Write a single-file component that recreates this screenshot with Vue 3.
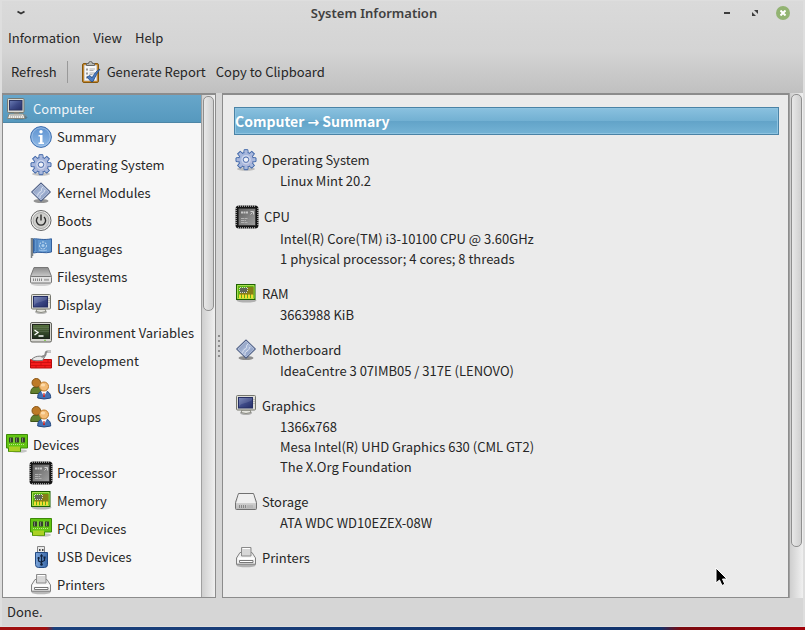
<script setup>
import { ref } from 'vue'

const selected = ref('Computer')

const tree = [
  { label: 'Computer', icon: 'computer', top: true },
  { label: 'Summary', icon: 'info' },
  { label: 'Operating System', icon: 'gear' },
  { label: 'Kernel Modules', icon: 'module' },
  { label: 'Boots', icon: 'power' },
  { label: 'Languages', icon: 'flag' },
  { label: 'Filesystems', icon: 'drive' },
  { label: 'Display', icon: 'display' },
  { label: 'Environment Variables', icon: 'terminal' },
  { label: 'Development', icon: 'bricks' },
  { label: 'Users', icon: 'users' },
  { label: 'Groups', icon: 'users' },
  { label: 'Devices', icon: 'card', top: true },
  { label: 'Processor', icon: 'cpu' },
  { label: 'Memory', icon: 'memory' },
  { label: 'PCI Devices', icon: 'card' },
  { label: 'USB Devices', icon: 'usb' },
  { label: 'Printers', icon: 'printer' },
]

const sections = [
  { title: 'Operating System', icon: 'gear', lines: ['Linux Mint 20.2'] },
  { title: 'CPU', icon: 'cpu', lines: ['Intel(R) Core(TM) i3-10100 CPU @ 3.60GHz', '1 physical processor; 4 cores; 8 threads'] },
  { title: 'RAM', icon: 'memory', lines: ['3663988 KiB'] },
  { title: 'Motherboard', icon: 'module', lines: ['IdeaCentre 3 07IMB05 / 317E (LENOVO)'] },
  { title: 'Graphics', icon: 'display', lines: ['1366x768', 'Mesa Intel(R) UHD Graphics 630 (CML GT2)', 'The X.Org Foundation'] },
  { title: 'Storage', icon: 'disk', lines: ['ATA WDC WD10EZEX-08W'] },
  { title: 'Printers', icon: 'printer', lines: [] },
]

const teeth = [0, 45, 90, 135, 180, 225, 270, 315]
</script>

<template>
  <div class="screen">
    <svg class="sprites" aria-hidden="true">
      <defs>
        <linearGradient id="g-screen" x1="0" y1="0" x2="1" y2="1"><stop offset="0" stop-color="#6c7db4" /><stop offset=".5" stop-color="#3d4a87" /><stop offset="1" stop-color="#242d66" /></linearGradient>
        <linearGradient id="g-info" x1="0" y1="0" x2="0" y2="1"><stop offset="0" stop-color="#5d92d0" /><stop offset="1" stop-color="#8fb9e6" /></linearGradient>
        <linearGradient id="g-gear" x1="0" y1="0" x2="1" y2="1"><stop offset="0" stop-color="#8fb0df" /><stop offset="1" stop-color="#c3bcd8" /></linearGradient>
        <linearGradient id="g-module" x1="0" y1="0" x2="1" y2="1"><stop offset="0" stop-color="#7888aa" /><stop offset=".5" stop-color="#a9b9d8" /><stop offset="1" stop-color="#6c80ad" /></linearGradient>
        <linearGradient id="g-metal" x1="0" y1="0" x2="0" y2="1"><stop offset="0" stop-color="#f2f2f2" /><stop offset="1" stop-color="#b9b9b9" /></linearGradient>
        <linearGradient id="g-drive" x1="0" y1="0" x2="0" y2="1"><stop offset="0" stop-color="#8c8c8c" /><stop offset="1" stop-color="#c9c9c9" /></linearGradient>
        <linearGradient id="g-term" x1="0" y1="0" x2="0" y2="1"><stop offset="0" stop-color="#58743f" /><stop offset="1" stop-color="#1d2b1d" /></linearGradient>
        <linearGradient id="g-chip" x1="0" y1="0" x2="1" y2="1"><stop offset="0" stop-color="#5e5e5e" /><stop offset="1" stop-color="#a0a0a0" /></linearGradient>
        <linearGradient id="g-usb" x1="0" y1="0" x2="1" y2="0"><stop offset="0" stop-color="#7ba5da" /><stop offset="1" stop-color="#3a68a8" /></linearGradient>
      </defs>

      <symbol id="computer" viewBox="0 0 22 22">
        <ellipse cx="13" cy="19.500" rx="8.500" ry="2" fill="#000" opacity=".25" />
        <rect x="1.500" y=".5" width="16.500" height="14" rx="1" fill="#dcdcd4" stroke="#77786f" />
        <rect x="3.500" y="2.500" width="12.500" height="9.500" fill="url(#g-screen)" stroke="#2c3563" />
        <path d="M8 14.500h5v2H8z" fill="#8d8d85" />
        <path d="M3 16h14.500l1.500 4.500H1.500z" fill="#ecece6" stroke="#84857c" />
        <path d="M4.500 17.500h12M4 19h13" stroke="#999" stroke-dasharray="1 1" />
        <path d="M18.500 17c2 0 2 1 1.500 2.500" stroke="#888" fill="none" />
      </symbol>

      <symbol id="info" viewBox="0 0 22 22">
        <circle cx="11" cy="11" r="10.400" fill="url(#g-info)" stroke="#3a6cae" />
        <circle cx="11" cy="11" r="9.200" fill="none" stroke="#b5d0ef" stroke-opacity=".6" />
        <circle cx="11" cy="5.800" r="1.700" fill="#fff" />
        <path d="M8.500 9h4v7.500h1.500V18H8.500v-1.500H10v-6H8.500z" fill="#fff" />
      </symbol>

      <symbol id="gear" viewBox="0 0 22 22">
        <ellipse cx="11" cy="20" rx="9" ry="1.800" fill="#000" opacity=".2" />
        <g fill="#9fb4dc" stroke="#3f66a8">
          <path v-for="a in teeth" :key="a" d="M8.700 5 9.200.7h3.600l.5 4.300z" :transform="`rotate(${a} 11 10.700)`" />
        </g>
        <circle cx="11" cy="10.700" r="7.300" fill="url(#g-gear)" stroke="#4a6dac" />
        <g fill="#a9b8dc"><path v-for="a in teeth" :key="a" d="M9.500 5.500V1.500h3v4z" :transform="`rotate(${a} 11 10.700)`" /></g>
        <circle cx="11" cy="10.700" r="4" fill="none" stroke="#cbd5ec" stroke-width="1.500" />
        <circle cx="11" cy="10.700" r="2.700" fill="#f2f4fa" stroke="#5372ae" />
      </symbol>

      <symbol id="module" viewBox="0 0 22 22">
        <ellipse cx="11" cy="19" rx="7.500" ry="2" fill="#000" opacity=".4" />
        <path d="M11 .8 20.500 10 11 19.300 1.500 10z" fill="url(#g-module)" stroke="#34466f" />
        <path d="M11 2.300 18.900 10 11 17.800 3.100 10z" fill="none" stroke="#c3cde2" stroke-opacity=".6" />
        <path d="M13 5c-3 2 0 4-3 5s-1 4-3 3M15 8c-1 2-1 3-3 4s-2 2-2 4" fill="none" stroke="#dfe6f3" />
      </symbol>

      <symbol id="power" viewBox="0 0 22 22">
        <circle cx="11" cy="10.500" r="10" fill="#ececea" stroke="#666" />
        <circle cx="11" cy="10.500" r="8" fill="#cfcfcc" stroke="#aaa" />
        <path d="M8 7a4.600 4.600 0 1 0 6 0M11 4.500v6" fill="none" stroke="#2c2c2c" stroke-width="1.400" />
      </symbol>

      <symbol id="flag" viewBox="0 0 22 22">
        <path d="M1.500 0v20M2.500 0v18" stroke="#7c8285" stroke-width="1.500" />
        <path d="M3.500 .8c6 0 10 1.500 18 0v13.200c-7 2-12-1-18 1z" fill="#6096cf" stroke="#335f9c" />
        <path d="M4.500 2v11M7 2v11.500" stroke="#34639f" opacity=".6" />
        <circle cx="13" cy="7.500" r="3.500" fill="none" stroke="#d4e6f7" stroke-dasharray="2 1" />
        <circle cx="13" cy="7.500" r="1.500" fill="#a9cdec" />
        <path d="M9 12c2 1 6 1 8 0" stroke="#9fc4ea" fill="none" />
      </symbol>

      <symbol id="drive" viewBox="0 0 22 22">
        <ellipse cx="11" cy="18" rx="10" ry="2" fill="#000" opacity=".15" />
        <path d="M4 1.500h14l3.500 9H.5z" fill="url(#g-drive)" stroke="#777" />
        <rect x=".5" y="10.500" width="21" height="6.500" rx="1" fill="#e4e4e4" stroke="#777" />
        <path d="M3 13.800h9" stroke="#888" stroke-width="2.500" stroke-dasharray="1 1" />
        <path d="M14 13.800h5" stroke="#aaa" stroke-width="2" />
      </symbol>

      <symbol id="disk" viewBox="0 0 22 22">
        <path d="M3.500 2.500h15l3 9v6q0 1-1 1h-19q-1 0-1-1v-6z" fill="url(#g-metal)" stroke="#707070" />
        <path d="M4 3.500h14l2.500 8.500h-19z" fill="#efefef" />
        <path d="M4 15.500h8" stroke="#888" stroke-width="3" stroke-dasharray="1 1" />
        <path d="M12.500 15.500h6" stroke="#aaa" stroke-width="3" stroke-dasharray="1 1" />
      </symbol>

      <symbol id="display" viewBox="0 0 22 22">
        <ellipse cx="11" cy="18" rx="6" ry="2" fill="#000" opacity=".25" />
        <path d="M7 15h8l1 2.500q-5 2-10 0z" fill="#e6e6e0" stroke="#8a8b82" />
        <rect x="1.500" y=".5" width="19" height="14.500" rx="1" fill="#deded7" stroke="#75766d" />
        <rect x="3.500" y="2.500" width="14" height="10.500" fill="url(#g-screen)" stroke="#252e63" />
        <path d="M4 12c2-5 8-3 13-7V3H4z" fill="#fff" opacity=".12" />
        <path d="M19 4v5" stroke="#999" stroke-dasharray="1 1" />
      </symbol>

      <symbol id="terminal" viewBox="0 0 22 22">
        <rect x=".5" y=".5" width="21" height="19.500" rx="1.500" fill="#d7d7d2" stroke="#62635d" />
        <rect x="2.500" y="2.500" width="17" height="14" fill="url(#g-term)" stroke="#20251e" />
        <path d="M3 5.500h16M3 7.500h16M3 9.500h16" stroke="#fff" opacity=".1" />
        <path d="m4.500 8 3.500 2.500L4.500 13M8.500 14h5" fill="none" stroke="#fff" stroke-width="1.300" />
        <path d="M14 18.300h2" stroke="#7ac943" />
      </symbol>

      <symbol id="bricks" viewBox="0 0 22 22">
        <path d="M.5 9.500h21v8.500H.5z" fill="#f41c1c" stroke="#b80c0c" />
        <path d="M1 12.500h20M1 15.500h20M4 10v2.500M11 12.500v3M18 10v2.500M6 15.500v2.500M15 15.500v2.500" stroke="#c80d0d" stroke-width=".8" />
        <path d="M1.500 9.500c5-5 11-3 13-2.500l-2 3.500c-3 0-8 1-11-1z" fill="#e8e8e8" stroke="#7b7b7b" />
        <path d="M12 7.500c1-3 3 0 3.500-3q0-3 2-3h3.500" fill="none" stroke="#8a8a8a" stroke-width="2" />
        <path d="M17.500 1.300h3.500" stroke="#d8d8d8" />
      </symbol>

      <symbol id="users" viewBox="0 0 22 22">
        <path d="M.7 15.500c0-5 2-6.500 5.500-6.500s6 2 6 6.500z" fill="#63802f" stroke="#3f5517" />
        <circle cx="6.300" cy="4.800" r="4.300" fill="#bd7a27" stroke="#8a5412" />
        <path d="M7.700 20c0-5 2-7 6.300-7s6.700 2 6.700 7q-6.700 2-13 0z" fill="#4472b4" stroke="#23477f" />
        <path d="m11 13 3 5.500L17 13z" fill="#fff" />
        <path d="M13.500 15h1l.5 4h-2z" fill="#c52020" />
        <circle cx="14" cy="8.500" r="4.500" fill="#f3bc76" stroke="#c17d2d" />
        <ellipse cx="13" cy="7" rx="2.200" ry="1.600" fill="#ffe2b8" opacity=".8" />
      </symbol>

      <symbol id="card" viewBox="0 0 22 22">
        <ellipse cx="13" cy="17" rx="8" ry="1.800" fill="#000" opacity=".2" />
        <path d="M.5.5h21v13.500h-7v3.500h-12V14h-2z" fill="#62c512" stroke="#3d8a08" />
        <path d="M3 3.500h4v5H3zM9 3.500h4v5H9zM15 3.500h4v5h-4z" fill="#33402a" />
        <path d="M4 5h1M10 5h1M16 5h1M4 7h1M10 7h1M16 7h1" stroke="#b9c9ae" />
        <path d="M8 3.500v5M14 3.500v5M3 10.500h16" stroke="#bde38b" stroke-dasharray="1 1" />
        <path d="M3.500 15h10.500" stroke="#f2dd35" stroke-width="5" stroke-dasharray="1 1" />
      </symbol>

      <symbol id="cpu" viewBox="0 0 24 24">
        <rect x=".5" y=".5" width="23" height="23" rx="3.500" fill="#151515" />
        <path d="M3 1h18M3 23h18M1 3v18M23 3v18" stroke="#bdbdbd" stroke-width="1.500" stroke-dasharray="1 1" />
        <rect x="3.500" y="3.500" width="17" height="17" rx="1" fill="url(#g-chip)" stroke="#3a3a3a" />
        <path d="M6 7.500h7.500" stroke="#c9c9c9" stroke-width="2" stroke-dasharray="2 .5" />
        <path d="M15.500 6.500h3v3M17.500 7.500l-2 2" fill="none" stroke="#cfcfcf" />
        <path d="M6 13.500h7M6 15.500h5M6 17.500h7" stroke="#b2b2b2" stroke-dasharray="3 .5" />
      </symbol>

      <symbol id="memory" viewBox="0 0 22 22">
        <ellipse cx="11.500" cy="17.500" rx="10" ry="2" fill="#000" opacity=".25" />
        <rect x="1.500" y="1.500" width="18.500" height="15" fill="#5cb513" stroke="#1f6104" />
        <path d="M2.500 2.500h16.500v13h-16.500z" fill="none" stroke="#a5dc4d" />
        <path d="M12 4h6.500v8H4.500v-2H12z" fill="#857f18" />
        <path d="M5 5h7v5H5z" fill="#5f6656" />
        <path d="M5 4.500h8M5 9.500h8M4.500 5v4M12.500 5v4" stroke="#d4d8cc" stroke-dasharray="1 1" />
        <path d="M4 13.500h14" stroke="#f4dc30" stroke-width="4" stroke-dasharray="2 1" />
      </symbol>

      <symbol id="usb" viewBox="0 0 22 22">
        <path d="M7.500.5h7v7h-7z" fill="#e9e9e9" stroke="#858585" />
        <path d="M9 3h1.500v2H9zM12 3h1.500v2H12z" fill="#444" />
        <path d="M5.500 6.500h12v12q0 3-3 3h-6q-3 0-3-3z" fill="url(#g-usb)" stroke="#234a83" />
        <path d="M11.500 9v10M8.500 12v3l3 1.500M14.500 11.500v3l-3 1.500" fill="none" stroke="#11233f" stroke-width="1.200" />
        <path d="m11.500 7.800-1.700 2.700h3.500zM7.700 11h1.800v2H7.700zM13.500 10.500h2v2h-2z" fill="#11233f" />
        <circle cx="11.500" cy="18.500" r="1.300" fill="#11233f" />
      </symbol>

      <symbol id="printer" viewBox="0 0 22 22">
        <ellipse cx="11" cy="18.500" rx="9.500" ry="1.800" fill="#000" opacity=".25" />
        <path d="M5 5.500h12l3.500 5.500v6.500H1.500V11z" fill="#f0f0f0" stroke="#808080" />
        <path d="M6.500.5h9.500v8.500H6.500z" fill="#d7d7d7" stroke="#8b8b8b" />
        <path d="M7.500 1.500h7.500" stroke="#fff" />
        <path d="M3 11.500h16.500" stroke="#fff" stroke-width="2" />
        <path d="M4.500 13.500h13.500v2H4.500z" fill="#fff" stroke="#777" />
        <path d="M2 16.800h18" stroke="#bbb" />
      </symbol>

      <symbol id="report" viewBox="0 0 22 22">
        <rect x="2.500" y="2.500" width="16" height="19" rx="1.500" fill="#c58a35" stroke="#85580f" />
        <path d="M4.500 4.500h12v15h-12z" fill="#f7f7f7" stroke="#d0d0d0" />
        <path d="M6.500 4.500v-2h2q0-2 2-2t2 2h2v2z" fill="#b9bab5" stroke="#666" />
        <path d="M6 7.500h2v2H6zM6 11.500h2v2H6zM6 15.500h2v2H6z" fill="#999" />
        <path d="M9.500 8h5.500M9.500 9.500h4M9.500 12h5.500M9.500 13.500h3M9.500 16h3" stroke="#b0b0b0" />
        <path d="m7 16 3-1.500 2 2.500c2-4 4-7 8-9-2 3-4.500 7-7 12.500H11z" fill="#4b7cc2" stroke="#204a87" stroke-width=".8" />
      </symbol>
    </svg>

    <div class="window">
      <header class="titlebar">
        <button class="wm" aria-label="Window menu"><svg width="10" height="6" viewBox="0 0 10 6"><path d="m1.500 1.500 3.500 2 3.500-2" fill="none" stroke="#333" stroke-width="1.800" /></svg></button>
        <h1>System Information</h1>
        <div class="wm-group">
          <button class="wm" aria-label="Minimize"><svg width="6" height="2"><path d="M0 0h6v2H0z" fill="#3c3c3c" /></svg></button>
          <button class="wm" aria-label="Maximize"><svg width="6" height="6"><path d="M2 0h4v4zM0 2v4h4z" fill="#3c3c3c" /></svg></button>
          <button class="wm close" aria-label="Close"><svg width="6" height="6"><path d="m.5.5 5 5m0-5-5 5" stroke="#fff" stroke-width="2" /></svg></button>
        </div>
      </header>

      <nav class="menubar" aria-label="Menu">
        <button>Information</button><button>View</button><button>Help</button>
      </nav>

      <div class="toolbar" role="toolbar">
        <button>Refresh</button>
        <span class="divider"></span>
        <button><svg class="icon"><use href="#report" /></svg>Generate Report</button>
        <button>Copy to Clipboard</button>
      </div>

      <main class="panes">
        <section class="pane side">
          <ul class="tree">
            <li v-for="item in tree" :key="item.label">
              <button :class="{ top: item.top, selected: selected === item.label }" @click="selected = item.label">
                <span class="slot"><svg class="icon" :class="{ wide: item.icon === 'cpu' }"><use :href="'#' + item.icon" /></svg></span>{{ item.label }}
              </button>
            </li>
          </ul>
          <div class="scroll"><div class="thumb short"></div></div>
        </section>

        <div class="grip" role="separator" aria-orientation="vertical">
          <i v-for="n in 5" :key="n"></i>
        </div>

        <section class="pane detail">
          <div class="content">
            <h2>Computer <span class="arrow">→</span> Summary</h2>
            <article v-for="s in sections" :key="s.title">
              <h3><svg class="icon" :class="{ wide: s.icon === 'cpu' }"><use :href="'#' + s.icon" /></svg>{{ s.title }}</h3>
              <p v-for="line in s.lines" :key="line">{{ line }}</p>
            </article>
          </div>
        </section>
        <div class="scroll"><div class="thumb long"></div></div>
      </main>

      <footer>Done.</footer>
    </div>
    <div class="desktop"></div>

    <svg class="pointer" width="14" height="20" viewBox="0 0 14 20" aria-hidden="true">
      <path d="M1 1v15l3.500-3 2.500 5.500 2.800-1.300L7.500 12H12z" fill="#000" stroke="#fff" />
    </svg>
  </div>
</template>

<style>
body { margin: 0; }
</style>

<style scoped>
* { box-sizing: border-box; }
.screen {
  display: flex;
  flex-direction: column;
  height: 100vh;
  overflow: hidden;
  color: #262626;
  font-family: "Noto Sans CJK JP", "Noto Sans", sans-serif;
  font-size: 13px;
  line-height: 20px;
}
.sprites { position: absolute; width: 0; height: 0; }
button {
  display: flex;
  align-items: center;
  gap: 5px;
  margin: 0;
  padding: 0;
  border: 0;
  background: none;
  color: inherit;
  font: inherit;
  white-space: nowrap;
}
h1, h2, h3, p, ul { margin: 0; padding: 0; }
.icon { display: block; flex: none; width: 22px; height: 22px; }
.icon.wide { width: 24px; height: 24px; }

.window {
  display: flex;
  flex: 1;
  flex-direction: column;
  min-height: 0;
  border: solid #dedede;
  border-width: 1px 2px;
  background: linear-gradient(#dadada, #d4d4d4 50px, #c0c0c0 92px, #d6d6d6 92px);
}
.titlebar {
  display: flex;
  align-items: center;
  height: 24px;
  padding: 0 13px 0 12px;
}
.titlebar h1 { flex: 1; color: #404040; font: 600 13px/20px "Noto Sans", sans-serif; text-align: center; }
.wm { justify-content: center; width: 14px; height: 14px; }
.wm-group { display: flex; gap: 14px; }
.close { border-radius: 50%; background: #92b372; }

.menubar { display: flex; gap: 13px; height: 25px; padding: 0 6px; }
.toolbar { display: flex; align-items: center; gap: 10px; height: 43px; padding: 0 9px; }
.divider { width: 1px; height: 22px; margin-right: 2px; background: #999; }

.panes { display: flex; flex: 1; min-height: 0; }
.pane { border: 1px solid #8c8c8c; border-top-width: 2px; overflow: hidden; }
.side { display: flex; flex: 0 0 214px; background: #f7f7f7; }
.tree { flex: 1; min-width: 0; list-style: none; }
.tree button { width: 100%; height: 28px; padding-left: 27px; }
.tree button.top { padding-left: 3px; }
.tree .selected {
  border-bottom: 1px solid #4d86a6;
  background: linear-gradient(#67a6ca, #5699be);
  color: #eef5f9;
}
.slot { display: flex; flex: none; justify-content: center; width: 22px; }
.scroll {
  flex: none;
  width: 14px;
  padding: 1px;
  border-left: 1px solid #a0a0a0;
  background: linear-gradient(90deg, #cfcfcf, #f0f0f0);
}
.thumb {
  border: 1px solid #8f8f8f;
  border-radius: 5px;
  background: linear-gradient(90deg, #e8e8e8, #cfcfcf);
}
.short { height: 43%; }
.long { height: 90%; }
.grip { display: flex; flex: none; flex-direction: column; align-items: center; justify-content: center; gap: 3px; width: 6px; }
.grip i { width: 2px; height: 2px; background: #8e8e8e; }

.detail { flex: 1; min-width: 0; background: #ebebeb; }
.content { display: flex; flex-direction: column; gap: 14px; padding: 12px 9px 12px 11px; }
h2 {
  height: 28px;
  border: 1px solid #4a83a6;
  background: linear-gradient(#8ac1df, #72b0d2 50%, #62a3c8 50%, #74b3d5);
  box-shadow: inset 0 0 0 1px #8ec3e0;
  color: #fff;
  font-size: 14px;
  font-weight: bold;
  line-height: 26px;
}
.arrow { font-family: "DejaVu Sans", sans-serif; }
h3 { display: flex; align-items: center; gap: 5px; padding-left: 1px; font: inherit; }
article p { padding-left: 46px; }
footer { height: 28px; padding: 4px 5px; }
.desktop { height: 3px; background: linear-gradient(90deg, #a01010 46px, #1b417c 54px, #12336c 660px, #7a0a10 680px, #a00008); }
.pointer { position: absolute; top: 567px; left: 715px; }
</style>
